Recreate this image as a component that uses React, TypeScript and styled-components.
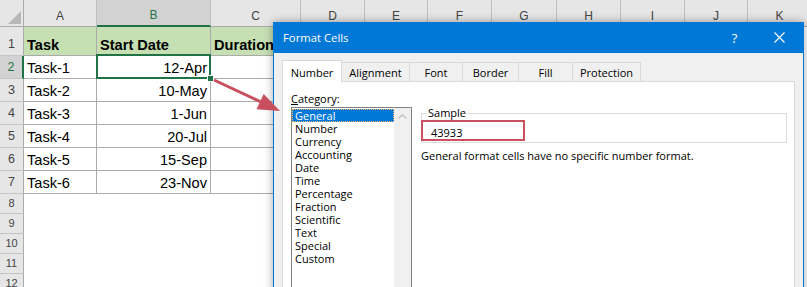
import React from 'react';
import styled, { createGlobalStyle } from 'styled-components';

const GlobalStyle = createGlobalStyle`
  html, body {
    margin: 0;
    padding: 0;
    background: #fff;
  }
  body {
    font-family: "Liberation Sans", Arial, sans-serif;
  }
`;

const COLS = [24, 73, 114, 90, 64, 63, 64, 65, 64, 64, 63, 64];
const ROWS = [27, 29, 23, 23, 23, 23, 23, 23, 20, 20, 20, 20, 20];
const LETTERS = ['A', 'B', 'C', 'D', 'E', 'F', 'G', 'H', 'I', 'J', 'K'];

const tasks = [
  ['Task', 'Start Date', 'Duration'],
  ['Task-1', '12-Apr', ''],
  ['Task-2', '10-May', ''],
  ['Task-3', '1-Jun', ''],
  ['Task-4', '20-Jul', ''],
  ['Task-5', '15-Sep', ''],
  ['Task-6', '23-Nov', ''],
];

const categories = [
  'General', 'Number', 'Currency', 'Accounting', 'Date', 'Time',
  'Percentage', 'Fraction', 'Scientific', 'Text', 'Special', 'Custom',
];

const tabs = [
  { label: 'Number', width: 60 },
  { label: 'Alignment', width: 68 },
  { label: 'Font', width: 53 },
  { label: 'Border', width: 56 },
  { label: 'Fill', width: 54 },
  { label: 'Protection', width: 68 },
];

const Stage = styled.div`
  position: relative;
  width: 807px;
  height: 287px;
  overflow: hidden;
  background: #fff;
`;

/* ---------- spreadsheet ---------- */

const Sheet = styled.div`
  display: grid;
  grid-template-columns: ${COLS.map((c) => `${c}px`).join(' ')};
  grid-template-rows: ${ROWS.map((r) => `${r}px`).join(' ')};
  font-family: "Liberation Sans", Arial, sans-serif;
`;

const Corner = styled.div`
  position: relative;
  box-sizing: border-box;
  background: #e6e6e6;
  border-right: 1px solid #ababab;
  border-bottom: 1px solid #ababab;

  &::after {
    content: '';
    position: absolute;
    right: 2px;
    bottom: 2px;
    width: 0;
    height: 0;
    border-left: 13px solid transparent;
    border-bottom: 13px solid #b8b8b8;
  }
`;

const ColHeader = styled.div<{ $selected?: boolean }>`
  box-sizing: border-box;
  display: flex;
  align-items: flex-end;
  justify-content: center;
  padding-bottom: 3px;
  background: ${(p) => (p.$selected ? '#d2d2d2' : '#e6e6e6')};
  color: ${(p) => (p.$selected ? '#217346' : '#444')};
  border-right: 1px solid #bfbfbf;
  border-bottom: ${(p) => (p.$selected ? '2px solid #217346' : '1px solid #ababab')};
  font-size: 12px;
`;

const RowHeader = styled.div<{ $selected?: boolean; $small?: boolean }>`
  box-sizing: border-box;
  display: flex;
  align-items: flex-end;
  justify-content: center;
  padding-bottom: 3px;
  background: ${(p) => (p.$selected ? '#d2d2d2' : '#e6e6e6')};
  color: ${(p) => (p.$selected ? '#217346' : '#444')};
  border-right: ${(p) => (p.$selected ? '2px solid #217346' : '1px solid #ababab')};
  border-bottom: 1px solid #c4c4c4;
  font-size: ${(p) => (p.$small ? 11 : 12.5)}px;
  line-height: ${(p) => (p.$small ? 13 : 15)}px;
`;

const Cell = styled.div<{ $head?: boolean; $right?: boolean; $bordered?: boolean; $active?: boolean }>`
  position: relative;
  box-sizing: border-box;
  display: flex;
  align-items: flex-end;
  justify-content: ${(p) => (p.$right ? 'flex-end' : 'flex-start')};
  padding: 0 3px 2px 3px;
  background: ${(p) => (p.$head ? '#c6e0b4' : '#fff')};
  border-right: ${(p) => (p.$bordered ? '1px solid #ababab' : 'none')};
  border-bottom: ${(p) => (p.$bordered ? '1px solid #ababab' : 'none')};
  font-size: 14.6px;
  font-weight: ${(p) => (p.$head ? 700 : 400)};
  color: #000;
  white-space: nowrap;

  ${(p) =>
    p.$active &&
    `
    &::before {
      content: '';
      position: absolute;
      left: -1px;
      top: -2px;
      right: -1px;
      bottom: -1px;
      border: 2px solid #217346;
      z-index: 2;
    }
    &::after {
      content: '';
      position: absolute;
      right: -4px;
      bottom: -4px;
      width: 5px;
      height: 5px;
      background: #217346;
      border: 1px solid #fff;
      z-index: 3;
    }
  `}
`;

/* ---------- dialog ---------- */

const Dialog = styled.div`
  position: absolute;
  left: 273px;
  top: 22px;
  width: 531px;
  height: 290px;
  box-sizing: border-box;
  display: flex;
  flex-direction: column;
  background: #f0f0f0;
  border: 1px solid #0078d7;
  border-top: none;
  box-shadow: 0 0 9px rgba(0, 0, 0, 0.35);
  font-family: "Open Sans", "Noto Sans", sans-serif;
  font-size: 11px;
  color: #000;
  z-index: 5;
`;

const TitleBar = styled.div`
  height: 31px;
  display: flex;
  align-items: center;
  background: #0078d7;
  color: #fff;
  padding-left: 9px;
  padding-right: 1px;
`;

const Title = styled.div`
  flex: 1;
  font-size: 11.3px;
`;

const TitleButton = styled.div`
  width: 45px;
  height: 31px;
  display: flex;
  align-items: center;
  justify-content: center;
  font-size: 13px;
`;

const Body = styled.div`
  flex: 1;
  display: flex;
  flex-direction: column;
  padding: 7px 8px 0 8px;
`;

const TabRow = styled.div`
  display: flex;
  align-items: flex-end;
  height: 21px;
  position: relative;
  z-index: 1;
`;

const Tab = styled.div<{ $active?: boolean; $w: number; $first?: boolean }>`
  box-sizing: border-box;
  width: ${(p) => p.$w}px;
  height: ${(p) => (p.$active ? 22 : 19)}px;
  margin-bottom: ${(p) => (p.$active ? -1 : 0)}px;
  display: flex;
  align-items: center;
  justify-content: center;
  padding-top: 1px;
  background: ${(p) => (p.$active ? '#fff' : '#f0f0f0')};
  border-top: 1px solid #d9d9d9;
  border-right: 1px solid #d9d9d9;
  border-left: ${(p) => (p.$first ? '1px solid #d9d9d9' : 'none')};
`;

const Panel = styled.div`
  flex: 1;
  display: flex;
  gap: 9px;
  background: #fff;
  border: 1px solid #d9d9d9;
  padding: 9px 7px 0 8px;
`;

const LeftCol = styled.div`
  width: 121px;
  display: flex;
  flex-direction: column;
`;

const FieldLabel = styled.div`
  line-height: 15px;
  margin-bottom: 1px;
`;

const ListBox = styled.div`
  box-sizing: border-box;
  height: 200px;
  display: flex;
  border: 1px solid #828282;
  background: #fff;
`;

const ListItems = styled.div`
  flex: 1;
  padding-top: 1px;
`;

const ListItem = styled.div<{ $selected?: boolean }>`
  height: 13px;
  line-height: 13px;
  padding-left: 3px;
  background: ${(p) => (p.$selected ? '#0078d7' : 'transparent')};
  color: ${(p) => (p.$selected ? '#fff' : '#000')};
  outline: ${(p) => (p.$selected ? '1px dotted #f4b36a' : 'none')};
  outline-offset: -1px;
`;

const ScrollTrack = styled.div`
  width: 17px;
  background: #f0f0f0;
  display: flex;
  flex-direction: column;
  align-items: center;
  padding-top: 6px;
  box-sizing: border-box;
`;

const RightCol = styled.div`
  flex: 1;
  display: flex;
  flex-direction: column;
`;

const GroupBox = styled.div`
  position: relative;
  margin-top: 22px;
  border: 1px solid #dcdcdc;
  padding: 6px 0 1px 0;
`;

const Legend = styled.div`
  position: absolute;
  left: 5px;
  top: -8px;
  padding: 0 1px;
  background: #fff;
  line-height: 14px;
`;

const SampleValue = styled.div`
  box-sizing: border-box;
  width: 104px;
  height: 21px;
  margin-left: -1px;
  display: flex;
  align-items: center;
  padding: 3px 0 0 8px;
  border: 2px solid #c9505f;
`;

const Description = styled.div`
  margin-top: 5px;
  line-height: 15px;
`;

const ArrowLayer = styled.svg`
  position: absolute;
  left: 200px;
  top: 70px;
  z-index: 6;
  pointer-events: none;
  overflow: visible;
`;

const ChevronUp = () => (
  <svg width="9" height="5" viewBox="0 0 9 5">
    <path d="M0.5 4.5 L4.5 0.8 L8.5 4.5" fill="none" stroke="#c2c2c2" strokeWidth="1.4" />
  </svg>
);

const CloseIcon = () => (
  <svg width="11" height="11" viewBox="0 0 11 11">
    <path d="M0.5 0.5 L10.5 10.5 M10.5 0.5 L0.5 10.5" stroke="#fff" strokeWidth="1.1" />
  </svg>
);

const App = () => {
  return (
    <Stage>
      <GlobalStyle />
      <Sheet>
        <Corner />
        {LETTERS.map((l) => (
          <ColHeader key={l} $selected={l === 'B'}>
            {l}
          </ColHeader>
        ))}
        {ROWS.slice(1).map((_, i) => {
          const r = i + 1;
          const data = tasks[r - 1];
          return (
            <React.Fragment key={r}>
              <RowHeader $selected={r === 2} $small={r >= 8}>
                {r}
              </RowHeader>
              {LETTERS.map((l, c) => {
                if (data && c < 3) {
                  return (
                    <Cell
                      key={l}
                      $head={r === 1}
                      $right={c === 1 && r > 1}
                      $bordered
                      $active={r === 2 && c === 1}
                    >
                      {data[c]}
                    </Cell>
                  );
                }
                return <Cell key={l} />;
              })}
            </React.Fragment>
          );
        })}
      </Sheet>

      <Dialog>
        <TitleBar>
          <Title>Format Cells</Title>
          <TitleButton>?</TitleButton>
          <TitleButton>
            <CloseIcon />
          </TitleButton>
        </TitleBar>
        <Body>
          <TabRow>
            {tabs.map((t, i) => (
              <Tab key={t.label} $w={t.width} $active={i === 0} $first={i === 0}>
                {t.label}
              </Tab>
            ))}
          </TabRow>
          <Panel>
            <LeftCol>
              <FieldLabel>
                <u>C</u>ategory:
              </FieldLabel>
              <ListBox>
                <ListItems>
                  {categories.map((c, i) => (
                    <ListItem key={c} $selected={i === 0}>
                      {c}
                    </ListItem>
                  ))}
                </ListItems>
                <ScrollTrack>
                  <ChevronUp />
                </ScrollTrack>
              </ListBox>
            </LeftCol>
            <RightCol>
              <GroupBox>
                <Legend>Sample</Legend>
                <SampleValue>43933</SampleValue>
              </GroupBox>
              <Description>General format cells have no specific number format.</Description>
            </RightCol>
          </Panel>
        </Body>
      </Dialog>

      <ArrowLayer width="90" height="50" viewBox="0 0 90 50">
        <line x1="14" y1="10" x2="61" y2="32" stroke="#c8505e" strokeWidth="3" />
        <polygon points="80,41 56.5,39.3 63.7,24" fill="#c8505e" />
      </ArrowLayer>
    </Stage>
  );
};

export default App;
